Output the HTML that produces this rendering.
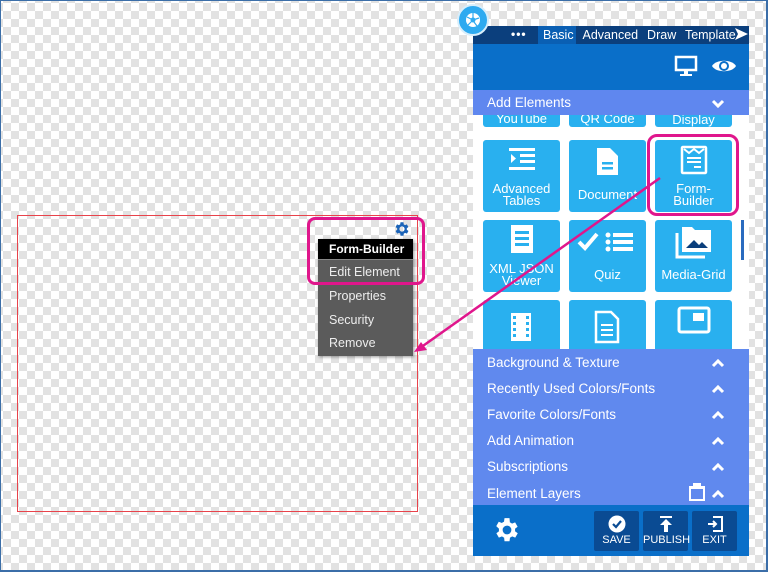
<!DOCTYPE html><html><head><style>
*{margin:0;padding:0;box-sizing:border-box}
body{width:768px;height:572px;overflow:hidden;font-family:"Liberation Sans",sans-serif;position:relative;
background-color:#fff;background-image:linear-gradient(45deg,#e2e2e2 25%,transparent 25%,transparent 75%,#e2e2e2 75%),linear-gradient(45deg,#e2e2e2 25%,transparent 25%,transparent 75%,#e2e2e2 75%);background-size:16px 16px;background-position:3px 3px,11px 11px}
.frame{position:absolute;left:0;top:0;width:768px;height:572px;border:1px solid #3b6ea8;border-right-width:2px;border-bottom-width:2px}
.abs{position:absolute}
.tile{position:absolute;width:77px;height:72px;background:#29b0ef;border-radius:3px;color:#fff;font-size:13px;text-align:center;line-height:12px}
.tile .l{position:absolute;left:0;right:0;bottom:5px}
.sec{position:absolute;left:14px;right:0;color:#fff;font-size:13.5px}
.car{position:absolute;right:24px;width:14px;height:9px}
.btn{position:absolute;top:511px;width:45px;height:40px;background:#0a4b93;border-radius:2px;color:#fff;font-size:11px;text-align:center}
.mi{position:absolute;left:11px;color:#eee;font-size:12.5px}
</style></head><body>
<div class="frame"></div>
<div class="abs" style="left:17px;top:215px;width:401px;height:297px;border:1px solid #e8434b"></div>
<div class="abs" style="left:318px;top:239px;width:95px;height:117px;background:#5b5b5b;box-shadow:1px 1px 3px rgba(0,0,0,.4)">
<div class="abs" style="left:0;top:0;width:95px;height:20px;background:#000;color:#fff;font-weight:bold;font-size:12px;line-height:20px;padding-left:11px">Form-Builder</div>
<div class="abs" style="left:0;top:20px;width:95px;height:1px;background:#888"></div>
<div class="mi" style="top:26px">Edit Element</div>
<div class="mi" style="top:50px">Properties</div>
<div class="mi" style="top:74px">Security</div>
<div class="mi" style="top:97px">Remove</div>
</div>
<svg class="abs" style="left:393px;top:220px" width="18" height="18" viewBox="0 0 24 24"><path fill="#1a63b8" d="M19.4 13a7.5 7.5 0 000-2l2.1-1.6-2-3.5-2.5 1a7 7 0 00-1.7-1L15 3h-4l-.4 2.9a7 7 0 00-1.7 1l-2.5-1-2 3.5L6.6 11a7.5 7.5 0 000 2l-2.1 1.6 2 3.5 2.5-1a7 7 0 001.7 1L11 21h4l.4-2.9a7 7 0 001.7-1l2.5 1 2-3.5zM13 15.5a3.5 3.5 0 110-7 3.5 3.5 0 010 7z" transform="translate(-1 0)"/></svg>
<div class="abs" style="left:307px;top:217px;width:118px;height:68px;border:3px solid #e0168c;border-radius:8px"></div>

<div class="abs" style="left:473px;top:26px;width:276px;height:18px;background:#0b3f7d"></div>
<div class="abs" style="left:538px;top:26px;width:38px;height:18px;background:#0a5fb3"></div>
<div class="abs" style="left:511px;top:27px;color:#fff;font-size:12px;font-weight:bold;letter-spacing:1px">•••</div>
<div class="abs" style="left:543px;top:28px;color:#fff;font-size:12.5px;word-spacing:1px">Basic &nbsp;Advanced&nbsp; Draw&nbsp; Template</div>
<svg class="abs" style="left:735px;top:28px" width="13" height="12" viewBox="0 0 13 12"><path d="M0 0l13 6-13 6 3-6z" fill="#fff"/></svg>
<div class="abs" style="left:473px;top:44px;width:276px;height:46px;background:#0a6fc9"></div>
<svg class="abs" style="left:674px;top:55px" width="24" height="22" viewBox="0 0 24 22"><rect x="2" y="2" width="20" height="13" fill="none" stroke="#fff" stroke-width="2.5"/><rect x="10" y="15" width="4" height="4" fill="#fff"/><rect x="6" y="19" width="12" height="2" fill="#fff"/></svg>
<svg class="abs" style="left:711px;top:57px" width="26" height="18" viewBox="0 0 26 18"><path d="M1 9C5 2 21 2 25 9 21 16 5 16 1 9z" fill="#fff"/><circle cx="13" cy="9" r="5" fill="#0a6fc9"/><circle cx="13" cy="9" r="3" fill="#fff"/></svg>
<div class="abs" style="left:473px;top:90px;width:276px;height:25px;background:#5f87ef"></div>
<div class="abs" style="left:487px;top:95px;color:#fff;font-size:13.5px">Add Elements</div>
<svg class="abs" style="left:711px;top:99px" width="14" height="9" viewBox="0 0 14 9"><path d="M2 2l5 5 5-5" stroke="#fff" stroke-width="3" fill="none"/></svg>
<div class="abs" style="left:473px;top:115px;width:276px;height:234px;background:#fff;overflow:hidden">
 <div class="tile" style="left:10px;top:-60px"><div class="l" style="bottom:2px">YouTube</div></div>
 <div class="tile" style="left:96px;top:-60px"><div class="l" style="bottom:2px">QR Code</div></div>
 <div class="tile" style="left:182px;top:-60px"><div class="l" style="bottom:1px">Display</div></div>
 <div class="tile" style="left:10px;top:25px"><div class="l">Advanced<br>Tables</div>
  <svg class="abs" style="left:25px;top:6px" width="28" height="28" viewBox="0 0 28 28" fill="#fff"><rect x="1" y="2" width="26" height="3"/><rect x="12" y="8" width="15" height="3"/><rect x="12" y="14" width="15" height="3"/><rect x="1" y="21" width="26" height="3"/><path d="M3 8l5 4.5-5 4.5z"/></svg></div>
 <div class="tile" style="left:96px;top:25px"><div class="l" style="bottom:11px">Document</div>
  <svg class="abs" style="left:26px;top:7px" width="24" height="30" viewBox="0 0 24 30" fill="#fff"><path d="M2 1h13l8 8v19H2z"/><rect x="7" y="15" width="11" height="2.5" fill="#29b0ef"/><rect x="7" y="20" width="11" height="2.5" fill="#29b0ef"/></svg></div>
 <div class="tile" style="left:182px;top:25px"><div class="l">Form-<br>Builder</div>
  <svg class="abs" style="left:25px;top:5px" width="28" height="30" viewBox="0 0 28 30"><rect x="2" y="2" width="24" height="26" fill="none" stroke="#fff" stroke-width="2.5" rx="1"/><path d="M4 4l5 4 5-4 5 4 5-4" stroke="#fff" stroke-width="2" fill="none"/><rect x="7" y="12" width="14" height="2" fill="#fff"/><rect x="7" y="16" width="14" height="2" fill="#fff"/><rect x="14" y="21" width="7" height="2" fill="#fff"/></svg></div>
 <div class="tile" style="left:10px;top:105px"><div class="l">XML JSON<br>Viewer</div>
  <svg class="abs" style="left:26px;top:3px" width="26" height="32" viewBox="0 0 26 32" fill="#fff"><path d="M2 2h22v28H2z"/><rect x="6" y="8" width="14" height="3" fill="#29b0ef"/><rect x="6" y="14" width="14" height="3" fill="#29b0ef"/><rect x="6" y="20" width="14" height="3" fill="#29b0ef"/></svg></div>
 <div class="tile" style="left:96px;top:105px"><div class="l" style="bottom:11px">Quiz</div>
  <svg class="abs" style="left:8px;top:10px" width="62" height="24" viewBox="0 0 62 24" fill="#fff"><path d="M2 12l6 6L20 4" stroke="#fff" stroke-width="4" fill="none"/><circle cx="31" cy="5" r="2.5"/><circle cx="31" cy="12" r="2.5"/><circle cx="31" cy="19" r="2.5"/><rect x="36" y="3" width="20" height="4"/><rect x="36" y="10" width="20" height="4"/><rect x="36" y="17" width="20" height="4"/></svg></div>
 <div class="tile" style="left:182px;top:105px"><div class="l" style="bottom:11px">Media-Grid</div>
  <svg class="abs" style="left:20px;top:5px" width="38" height="34" viewBox="0 0 38 34" fill="#fff"><path d="M2 8v24h28" stroke="#fff" stroke-width="3" fill="none"/><path d="M7 2h10l3 3h16v22H7z"/><path d="M11 23l8-8 5 5 3-3 6 6z" fill="#0a3f7c"/></svg></div>
 <div class="tile" style="left:10px;top:185px">
  <svg class="abs" style="left:26px;top:12px" width="24" height="30" viewBox="0 0 24 30" fill="#fff"><rect x="2" y="1" width="20" height="28"/><g fill="#29b0ef"><rect x="4" y="4" width="3" height="3"/><rect x="4" y="10" width="3" height="3"/><rect x="4" y="16" width="3" height="3"/><rect x="4" y="22" width="3" height="3"/><rect x="17" y="4" width="3" height="3"/><rect x="17" y="10" width="3" height="3"/><rect x="17" y="16" width="3" height="3"/><rect x="17" y="22" width="3" height="3"/></g></svg></div>
 <div class="tile" style="left:96px;top:185px">
  <svg class="abs" style="left:24px;top:10px" width="28" height="34" viewBox="0 0 28 34"><path d="M3 2h15l7 7v23H3z" fill="none" stroke="#fff" stroke-width="2.5"/><rect x="8" y="14" width="12" height="2" fill="#fff"/><rect x="8" y="19" width="12" height="2" fill="#fff"/><rect x="8" y="24" width="12" height="2" fill="#fff"/></svg></div>
 <div class="tile" style="left:182px;top:185px"><div class="l" style="bottom:-3px">HTML</div>
  <svg class="abs" style="left:22px;top:6px" width="34" height="30" viewBox="0 0 34 30"><rect x="2" y="2" width="30" height="24" fill="none" stroke="#fff" stroke-width="3" rx="2"/><rect x="16" y="7" width="11" height="8" fill="#fff"/></svg></div>
 <div class="abs" style="left:268px;top:105px;width:3px;height:40px;background:#2a6bbf"></div>
</div>
<div class="abs" style="left:473px;top:349px;width:276px;height:156px;background:#6089ee">
 <div class="sec" style="top:6px">Background &amp; Texture</div>
 <div class="sec" style="top:32px">Recently Used Colors/Fonts</div>
 <div class="sec" style="top:58px">Favorite Colors/Fonts</div>
 <div class="sec" style="top:84px">Add Animation</div>
 <div class="sec" style="top:110px">Subscriptions</div>
 <div class="sec" style="top:137px">Element Layers</div>
 <svg class="car" style="top:10px" viewBox="0 0 14 9"><path d="M2 7l5-5 5 5" stroke="#fff" stroke-width="3" fill="none"/></svg>
 <svg class="car" style="top:36px" viewBox="0 0 14 9"><path d="M2 7l5-5 5 5" stroke="#fff" stroke-width="3" fill="none"/></svg>
 <svg class="car" style="top:62px" viewBox="0 0 14 9"><path d="M2 7l5-5 5 5" stroke="#fff" stroke-width="3" fill="none"/></svg>
 <svg class="car" style="top:88px" viewBox="0 0 14 9"><path d="M2 7l5-5 5 5" stroke="#fff" stroke-width="3" fill="none"/></svg>
 <svg class="car" style="top:114px" viewBox="0 0 14 9"><path d="M2 7l5-5 5 5" stroke="#fff" stroke-width="3" fill="none"/></svg>
 <svg class="car" style="top:141px" viewBox="0 0 14 9"><path d="M2 7l5-5 5 5" stroke="#fff" stroke-width="3" fill="none"/></svg>
 <svg class="abs" style="left:214px;top:133px" width="20" height="20" viewBox="0 0 20 20"><rect x="2" y="4" width="16" height="15" fill="#fff"/><rect x="4" y="7" width="12" height="10" fill="#6089ee"/><rect x="6" y="1" width="8" height="5" fill="#fff"/></svg>
</div>
<div class="abs" style="left:473px;top:505px;width:276px;height:51px;background:#0a6fc9"></div>
<svg class="abs" style="left:492px;top:515px" width="30" height="30" viewBox="0 0 24 24"><path fill="#fff" d="M19.4 13a7.5 7.5 0 000-2l2.1-1.6-2-3.5-2.5 1a7 7 0 00-1.7-1L15 2.5h-4l-.4 2.9a7 7 0 00-1.7 1l-2.5-1-2 3.5L6.6 11a7.5 7.5 0 000 2l-2.1 1.6 2 3.5 2.5-1a7 7 0 001.7 1l.3 2.9h4l.4-2.9a7 7 0 001.7-1l2.5 1 2-3.5zM13 15.5a3.5 3.5 0 110-7 3.5 3.5 0 010 7z" transform="translate(-1 0)"/></svg>
<div class="btn" style="left:594px"><svg style="margin-top:4px" width="18" height="18" viewBox="0 0 18 18"><circle cx="9" cy="9" r="8.5" fill="#fff"/><path d="M5 9l3 3 5-6" stroke="#0a4b93" stroke-width="2.2" fill="none"/></svg><div style="margin-top:-2px">SAVE</div></div>
<div class="btn" style="left:643px"><svg style="margin-top:4px" width="18" height="18" viewBox="0 0 18 18" fill="#fff"><rect x="3" y="1" width="12" height="2"/><path d="M9 4l6 6h-4v7H7v-7H3z"/></svg><div style="margin-top:-2px">PUBLISH</div></div>
<div class="btn" style="left:692px"><svg style="margin-top:4px" width="18" height="18" viewBox="0 0 18 18"><path d="M7 2h9v14H7" stroke="#fff" stroke-width="2" fill="none"/><path d="M2 9h8M7 6l3 3-3 3" stroke="#fff" stroke-width="2" fill="none"/></svg><div style="margin-top:-2px">EXIT</div></div>
<div class="abs" style="left:457px;top:4px;width:32px;height:32px;border-radius:50%;background:#2eaaf0;border:2px solid #d8eefb"></div>
<svg class="abs" style="left:465px;top:12px" width="16" height="16" viewBox="0 0 16 16"><circle cx="8" cy="8" r="7" fill="#fff"/><circle cx="8" cy="8" r="2.5" fill="#2eaaf0"/><path d="M8 1v5M14 6l-4.5 1.5M12 14l-3-4M3 13l3.5-3.5M2 5l4 2" stroke="#2eaaf0" stroke-width="1.2"/></svg>
<div class="abs" style="left:647px;top:134px;width:92px;height:82px;border:3px solid #e0168c;border-radius:10px"></div>
<svg class="abs" style="left:0;top:0" width="768" height="572"><line x1="660" y1="178" x2="420" y2="348" stroke="#e0168c" stroke-width="2.5"/><path d="M414 352l13-2-6-8z" fill="#e0168c"/></svg>
</body></html>
